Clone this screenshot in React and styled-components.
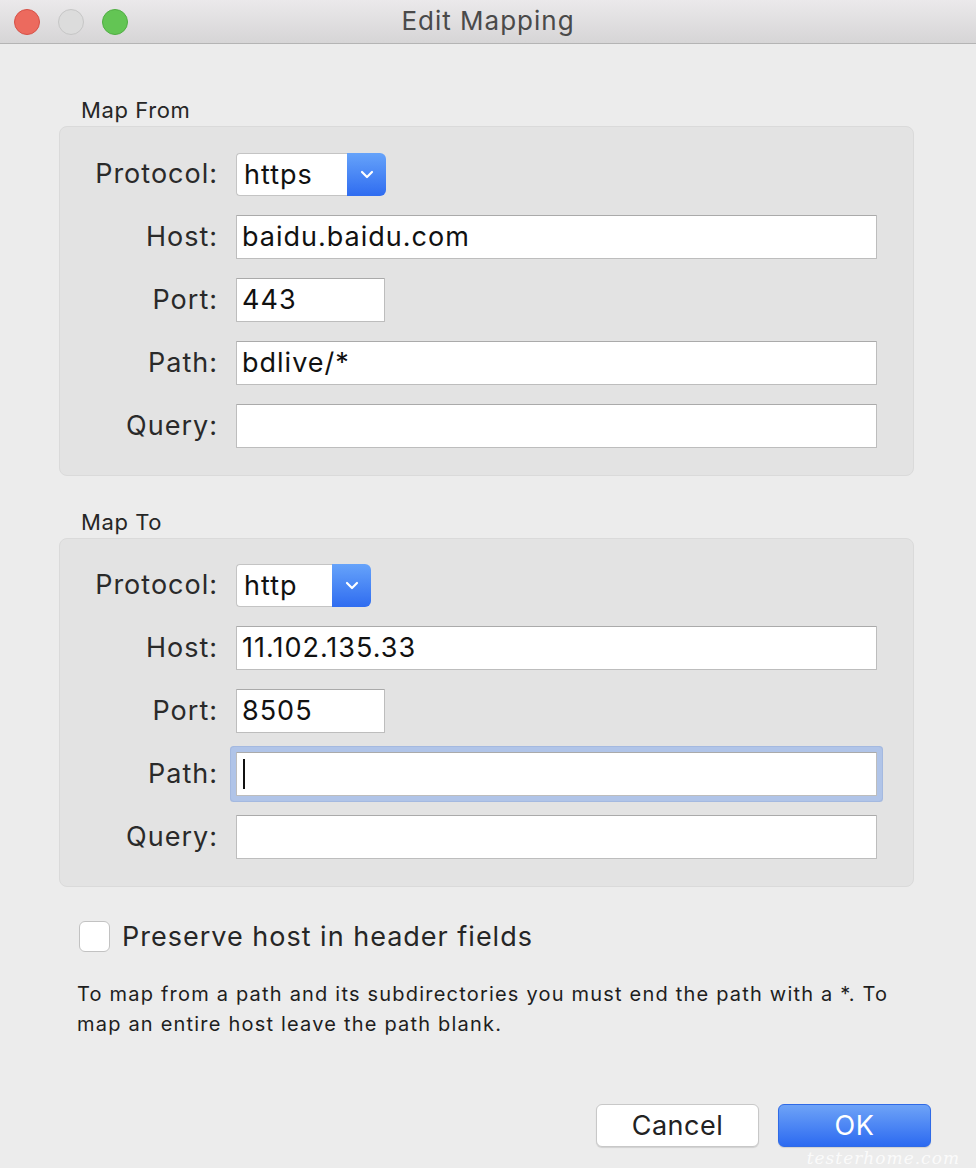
import React from "react";
import styled, { createGlobalStyle } from "styled-components";

const Global = createGlobalStyle`
  html, body { margin: 0; padding: 0; background: #ececec; }
  body { font-family: Inter, "Open Sans", "Liberation Sans", sans-serif; }
`;

const Window = styled.div`
  width: 976px;
  height: 1168px;
  background: #ececec;
  display: flex;
  flex-direction: column;
  overflow: hidden;
  position: relative;
`;

const TitleBar = styled.div`
  height: 43px;
  flex: none;
  border-bottom: 1px solid #b4b4b4;
  background: linear-gradient(#ebe9eb, #d6d5d6);
  display: flex;
  align-items: center;
  position: relative;
`;

const Lights = styled.div`
  display: flex;
  gap: 18px;
  padding-left: 14px;
`;

const Light = styled.span`
  width: 26px;
  height: 26px;
  border-radius: 50%;
  box-sizing: border-box;
  background: ${(p) => p.$bg};
  border: 1px solid ${(p) => p.$bd};
`;

const Title = styled.div`
  position: absolute;
  left: 0;
  right: 0;
  text-align: center;
  font-size: 26px;
  letter-spacing: 1px;
  color: #4a4a4a;
  top: 4px;
  line-height: 34px;
  pointer-events: none;
`;

const Content = styled.div`
  padding: 53px 62px 0 59px;
  display: flex;
  flex-direction: column;
`;

const SectionLabel = styled.div`
  font-size: 22px;
  letter-spacing: 0.6px;
  line-height: 26px;
  color: #262626;
  padding-left: 22px;
  margin-bottom: 3px;
  margin-top: ${(p) => p.$mt || 0}px;
`;

const Panel = styled.div`
  background: #e3e3e3;
  border: 1px solid #dadada;
  border-radius: 8px;
  box-sizing: border-box;
  padding: ${(p) => p.$pt}px 36px 27px 0;
  display: grid;
  grid-template-columns: 158px 1fr;
  column-gap: 18px;
  row-gap: ${(p) => p.$gap}px;
  align-items: center;
`;

const Label = styled.div`
  text-align: right;
  font-size: 27px;
  letter-spacing: 1px;
  color: #2a2a2a;
  line-height: 44px;
`;

const Field = styled.div`
  height: 44px;
  box-sizing: border-box;
  background: #fff;
  border: 1px solid #bdbdbd;
  border-top-color: #aaaaaa;
  width: ${(p) => (p.$w ? `${p.$w}px` : "100%")};
  font-size: 27px;
  letter-spacing: 1px;
  color: #111;
  padding-left: 5px;
  line-height: 42px;
  display: flex;
  align-items: center;
  border-radius: 1px;
  box-shadow: ${(p) =>
    p.$focus ? "0 0 0 5px #b0c4e8, 0 0 0 6px #a4b9e0" : "none"};
`;

const Caret = styled.span`
  width: 2px;
  height: 30px;
  background: #111;
  margin-left: 1px;
`;

const Select = styled.div`
  height: 43px;
  width: ${(p) => p.$w}px;
  display: flex;
  box-sizing: border-box;
`;

const SelectValue = styled.div`
  flex: 1;
  background: #fff;
  border: 1px solid #c4c4c4;
  border-right: none;
  border-radius: 4px 0 0 4px;
  font-size: 27px;
  letter-spacing: 1px;
  color: #111;
  padding-left: 7px;
  display: flex;
  align-items: center;
`;

const SelectButton = styled.div`
  width: 39px;
  background: linear-gradient(#66a3fa, #2f6cf0);
  border-radius: 0 6px 6px 0;
  display: flex;
  align-items: center;
  justify-content: center;
`;

const CheckRow = styled.div`
  display: flex;
  align-items: center;
  gap: 12px;
  margin-top: 33px;
  padding-left: 20px;
`;

const Checkbox = styled.span`
  width: 31px;
  height: 31px;
  box-sizing: border-box;
  background: #fff;
  border: 1px solid #c2c2c2;
  border-radius: 6px;
`;

const CheckText = styled.span`
  font-size: 27px;
  letter-spacing: 1px;
  color: #262626;
`;

const Help = styled.p`
  margin: 26px 0 0 18px;
  font-size: 20px;
  letter-spacing: 1.2px;
  line-height: 30px;
  color: #1e1e1e;
  width: 835px;
`;

const Buttons = styled.div`
  margin-top: auto;
  display: flex;
  justify-content: flex-end;
  gap: 19px;
  padding: 0 45px 21px 0;
`;

const Button = styled.div`
  width: ${(p) => p.$w}px;
  height: 43px;
  box-sizing: border-box;
  border-radius: 6px;
  font-size: 27px;
  letter-spacing: 0.5px;
  display: flex;
  align-items: center;
  justify-content: center;
  color: ${(p) => (p.$primary ? "#fff" : "#222")};
  background: ${(p) =>
    p.$primary ? "linear-gradient(#6ea3f7, #2c6af1)" : "#fff"};
  border: 1px solid ${(p) => (p.$primary ? "#2f6ae6" : "#c8c8c8")};
  box-shadow: 0 1px 1px rgba(0, 0, 0, 0.12);
`;

const Watermark = styled.div`
  position: absolute;
  right: 16px;
  bottom: 0px;
  font-family: "DejaVu Serif", serif;
  font-style: italic;
  font-size: 17px;
  line-height: 20px;
  color: rgba(255, 255, 255, 0.8);
  letter-spacing: 1px;
  pointer-events: none;
`;

const Chevron = () => (
  <svg width="14" height="9" viewBox="0 0 14 9">
    <path
      d="M2 2 L7 7 L12 2"
      fill="none"
      stroke="#fff"
      strokeWidth="2.2"
      strokeLinecap="round"
      strokeLinejoin="round"
    />
  </svg>
);

const rowsFrom = [
  { label: "Host:", value: "baidu.baidu.com" },
  { label: "Port:", value: "443", w: 149 },
  { label: "Path:", value: "bdlive/*" },
  { label: "Query:", value: "" },
];

const rowsTo = [
  { label: "Host:", value: "11.102.135.33" },
  { label: "Port:", value: "8505", w: 149 },
  { label: "Path:", value: "", focus: true },
  { label: "Query:", value: "" },
];

const MappingPanel = ({ protocol, selectW, rows, pt }) => (
  <Panel $pt={pt} $gap={19}>
    <Label>Protocol:</Label>
    <Select $w={selectW}>
      <SelectValue>{protocol}</SelectValue>
      <SelectButton>
        <Chevron />
      </SelectButton>
    </Select>
    {rows.map((r) => (
      <React.Fragment key={r.label}>
        <Label>{r.label}</Label>
        <Field $w={r.w} $focus={r.focus}>
          {r.focus ? <Caret /> : r.value}
        </Field>
      </React.Fragment>
    ))}
  </Panel>
);

export default function App() {
  return (
    <Window>
      <Global />
      <TitleBar>
        <Lights>
          <Light $bg="#ec6a5e" $bd="#d65046" />
          <Light $bg="#dcdcdc" $bd="#c6c6c6" />
          <Light $bg="#63c554" $bd="#4fae42" />
        </Lights>
        <Title>Edit Mapping</Title>
      </TitleBar>
      <Content>
        <SectionLabel>Map From</SectionLabel>
        <MappingPanel protocol="https" selectW={150} rows={rowsFrom} pt={25} />
        <SectionLabel $mt={33}>Map To</SectionLabel>
        <MappingPanel protocol="http" selectW={135} rows={rowsTo} pt={24} />
        <CheckRow>
          <Checkbox />
          <CheckText>Preserve host in header fields</CheckText>
        </CheckRow>
        <Help>
          To map from a path and its subdirectories you must end the path with a
          *. To map an entire host leave the path blank.
        </Help>
      </Content>
      <Buttons>
        <Button $w={163}>Cancel</Button>
        <Button $w={153} $primary>
          OK
        </Button>
      </Buttons>
      <Watermark>testerhome.com</Watermark>
    </Window>
  );
}
